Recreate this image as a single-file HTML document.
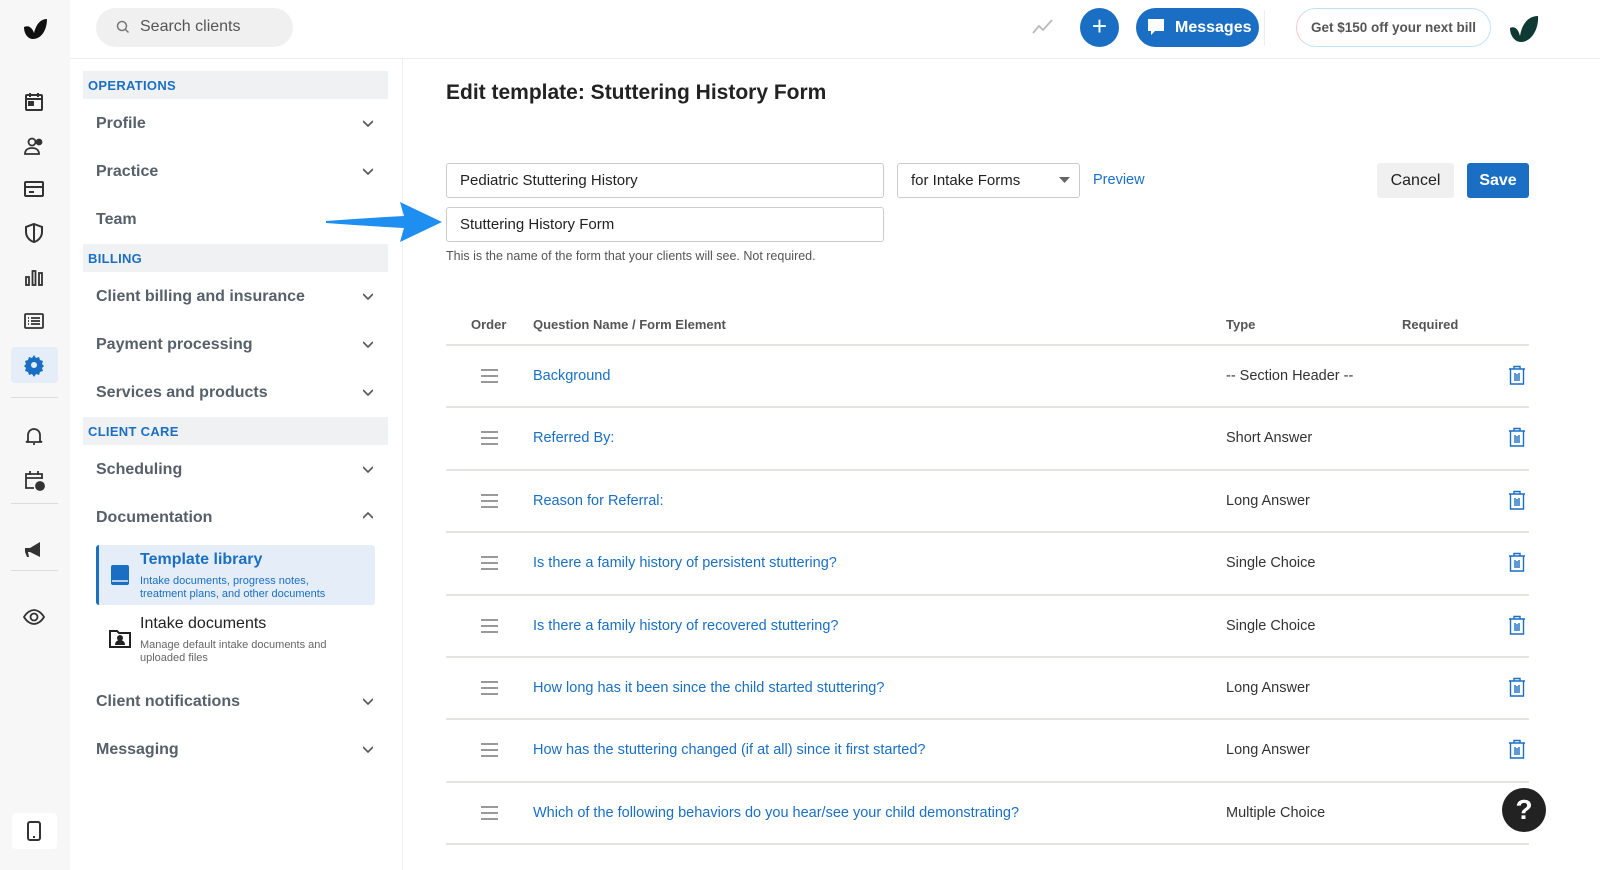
<!DOCTYPE html>
<html><head><style>
*{box-sizing:border-box;margin:0;padding:0}
body{width:1600px;height:870px;overflow:hidden;font-family:"Liberation Sans",Arial,sans-serif;background:#fff;position:relative;color:#222}
.rail{position:absolute;left:0;top:0;width:70px;height:870px;background:#f7f7f7}
.ri{position:absolute;left:22px;width:24px;height:24px}
.sep{position:absolute;left:11px;width:47px;height:1px;background:#ddd}
.top{position:absolute;left:70px;top:0;right:0;height:59px;border-bottom:1px solid #ececec}
.side{position:absolute;left:70px;top:59px;width:333px;height:811px;border-right:1px solid #eee}
.sh{position:absolute;left:13px;width:305px;height:28px;background:#f0f1f2;color:#1a6fc4;font-weight:bold;font-size:13px;padding:7px 5px;letter-spacing:.3px}
.si{position:absolute;left:26px;font-size:16px;color:#56606a;font-weight:bold}
.chev{position:absolute;left:293px;width:10px;height:10px}
.main{position:absolute;left:446px}
.in{position:absolute;border:1px solid #ccc;border-radius:3px;font-size:15px;padding:0 13px;line-height:33px;height:35px;color:#222}
.row{position:absolute;left:446px;width:1083px;height:63px;border-top:2px solid #e6e4df}
.row .q{position:absolute;left:87px;top:22px;color:#1a6fc4;font-size:14.5px}
.row .t{position:absolute;left:780px;top:22px;font-size:14.5px;color:#333}
.row .h{position:absolute;left:35px;top:23px;width:17px}
.row .h i{display:block;height:2px;background:#999;margin-bottom:4px}
.row svg{position:absolute;left:1062px;top:19px}
</style></head><body>
<div class="rail">
<svg style="position:absolute;left:22px;top:17px" width="26" height="24" viewBox="0 0 26 24"><path d="M2 10 C6 8 10 10 12 16 C14 8 18 2 25 2 C25 12 20 22 11 22 C6 22 2 17 2 10Z" fill="#111"/></svg>
<svg class="ri" style="top:90px" viewBox="0 0 24 24" fill="none" stroke="#333" stroke-width="2"><rect x="4" y="5" width="16" height="15" rx="1"/><path d="M4 9h16M8 3v4M16 3v4"/><rect x="7" y="12" width="4" height="3" fill="#333"/></svg>
<svg class="ri" style="top:134px" viewBox="0 0 24 24" fill="none" stroke="#333" stroke-width="1.8"><circle cx="10" cy="8" r="3.5"/><path d="M3 20c0-4 3-6 7-6s7 2 7 6z"/><circle cx="17" cy="8" r="2.5" fill="#333"/></svg>
<svg class="ri" style="top:177px" viewBox="0 0 24 24" fill="none" stroke="#333" stroke-width="2"><rect x="3" y="5" width="18" height="14" rx="1"/><path d="M3 10h18M7 15h5"/></svg>
<svg class="ri" style="top:221px" viewBox="0 0 24 24" fill="none" stroke="#333" stroke-width="2"><path d="M12 3l8 3v5c0 5-4 9-8 10-4-1-8-5-8-10V6z M12 3v18"/></svg>
<svg class="ri" style="top:265px" viewBox="0 0 24 24" fill="none" stroke="#333" stroke-width="1.8"><rect x="4" y="12" width="3" height="8"/><rect x="10.5" y="6" width="3" height="14"/><rect x="17" y="8" width="3" height="12"/></svg>
<svg class="ri" style="top:309px" viewBox="0 0 24 24" fill="none" stroke="#333" stroke-width="1.8"><rect x="3" y="5" width="18" height="14" rx="1"/><path d="M6 9h1M9 9h9M6 12h1M9 12h9M6 15h1M9 15h9"/></svg>
<div style="position:absolute;left:11px;top:347px;width:47px;height:36px;background:#e5eef8;border-radius:4px"></div>
<svg class="ri" style="top:353px" viewBox="0 0 24 24"><path d="M12 2l2 3 3-1 1 3 3 1-1 3 2 2-2 2 1 3-3 1-1 3-3-1-2 3-2-3-3 1-1-3-3-1 1-3-2-2 2-2-1-3 3-1 1-3 3 1z" fill="#1a6fc4"/><circle cx="12" cy="12" r="3" fill="#e5eef8"/></svg>
<div class="sep" style="top:397px"></div>
<svg class="ri" style="top:424px" viewBox="0 0 24 24" fill="none" stroke="#333" stroke-width="1.8"><path d="M6 17V11a6 6 0 0112 0v6l2 1H4z M11 20h2"/></svg>
<svg class="ri" style="top:468px" viewBox="0 0 24 24" fill="none" stroke="#333" stroke-width="1.8"><path d="M20 11V6H4v14h8M4 10h16M8 3v4M16 3v4"/><circle cx="18" cy="18" r="4" fill="#333"/></svg>
<div class="sep" style="top:503px"></div>
<svg class="ri" style="top:538px" viewBox="0 0 24 24"><path d="M3 10h5l10-6v15L8 14H6l1 5H5l-2-5z" fill="#333"/></svg>
<div class="sep" style="top:570px"></div>
<svg class="ri" style="top:605px" viewBox="0 0 24 24" fill="none" stroke="#333" stroke-width="1.8"><path d="M2 12c3-5 7-7 10-7s7 2 10 7c-3 5-7 7-10 7s-7-2-10-7z"/><circle cx="12" cy="12" r="3.5"/></svg>
<div style="position:absolute;left:12px;top:813px;width:45px;height:36px;background:#fff;border-radius:4px"></div>
<svg class="ri" style="top:819px" viewBox="0 0 24 24" fill="none" stroke="#333" stroke-width="2"><rect x="6" y="3" width="12" height="18" rx="2"/><path d="M11 18h2"/></svg>
</div>
<div class="top">
<div style="position:absolute;left:26px;top:8px;width:197px;height:39px;border-radius:20px;background:#f0f0f0;font-size:16px;color:#555;padding:10px 0 0 44px">Search clients</div>
<svg style="position:absolute;left:46px;top:20px" width="14" height="14" viewBox="0 0 14 14" fill="none" stroke="#777" stroke-width="1.5"><circle cx="6" cy="6" r="4.5"/><path d="M9.5 9.5l3 3"/></svg>
<svg style="position:absolute;left:962px;top:18px" width="22" height="18" viewBox="0 0 22 18" fill="none" stroke="#bbb" stroke-width="1.8"><path d="M1 15l6-7 4 4 9-10"/></svg>
<div style="position:absolute;left:1010px;top:8px;width:39px;height:39px;border-radius:50%;background:#1a6fc4;color:#fff;font-size:26px;text-align:center;line-height:37px">+</div>
<div style="position:absolute;left:1066px;top:8px;width:123px;height:39px;border-radius:20px;background:#1a6fc4;color:#fff;font-size:16px;font-weight:bold;padding:11px 0 0 39px">Messages</div>
<svg style="position:absolute;left:1076px;top:17px" width="20" height="20" viewBox="0 0 20 20"><path d="M2 2h16v12H9l-4 4v-4H2z" fill="#fff"/></svg>
<div style="position:absolute;left:1194px;top:10px;width:1px;height:36px;background:#eee"></div>
<div style="position:absolute;left:1226px;top:8px;width:195px;height:39px;border-radius:20px;border:1px solid #bfe3f2;border-left-color:#f5c8cc;font-size:13.5px;font-weight:bold;color:#555;padding:11px 0 0 14px">Get $150 off your next bill</div>
<svg style="position:absolute;left:1438px;top:12px" width="32" height="32" viewBox="0 0 32 32"><path d="M2 16 C6 14 10 16 12 24 C14 12 20 4 30 4 C31 16 24 30 13 30 C7 30 2 24 2 16Z" fill="#0f3a33"/></svg>
</div>
<div class="side">
<div class="sh" style="top:12px">OPERATIONS</div>
<div class="si" style="top:56px">Profile</div>
<div class="si" style="top:104px">Practice</div>
<div class="si" style="top:152px">Team</div>
<div class="sh" style="top:185px">BILLING</div>
<div class="si" style="top:229px">Client billing and insurance</div>
<div class="si" style="top:277px">Payment processing</div>
<div class="si" style="top:325px">Services and products</div>
<div class="sh" style="top:358px">CLIENT CARE</div>
<div class="si" style="top:402px">Scheduling</div>
<div class="si" style="top:450px">Documentation</div>
<div style="position:absolute;left:26px;top:486px;width:279px;height:60px;background:#e5eef8;border-left:3px solid #1a6fc4;border-radius:3px"></div>
<svg style="position:absolute;left:40px;top:505px" width="20" height="22" viewBox="0 0 20 22"><rect x="1" y="1" width="18" height="20" rx="2" fill="#1a6fc4"/><path d="M2 17h16" stroke="#e5eef8" stroke-width="1.5"/></svg>
<div style="position:absolute;left:70px;top:492px;font-size:16px;color:#1a6fc4;font-weight:bold">Template library</div>
<div style="position:absolute;left:70px;top:516px;font-size:11px;color:#1a6fc4;line-height:13px">Intake documents, progress notes,<br>treatment plans, and other documents</div>
<svg style="position:absolute;left:39px;top:569px" width="22" height="20" viewBox="0 0 22 20" fill="none" stroke="#222" stroke-width="2"><path d="M1 3h7l2 2h11v14H1z"/><circle cx="11" cy="10" r="2" fill="#222"/><path d="M7 17c0-3 2-4 4-4s4 1 4 4" fill="#222"/></svg>
<div style="position:absolute;left:70px;top:556px;font-size:16px;color:#222">Intake documents</div>
<div style="position:absolute;left:70px;top:580px;font-size:11px;color:#666;line-height:13px">Manage default intake documents and<br>uploaded files</div>
<div class="si" style="top:634px">Client notifications</div>
<div class="si" style="top:682px">Messaging</div>
<svg class="chev" style="top:60px" viewBox="0 0 10 10"><path d="M0 2l5 5 5-5" stroke="#555" stroke-width="1.6" fill="none"/></svg>
<svg class="chev" style="top:108px" viewBox="0 0 10 10"><path d="M0 2l5 5 5-5" stroke="#555" stroke-width="1.6" fill="none"/></svg>
<svg class="chev" style="top:233px" viewBox="0 0 10 10"><path d="M0 2l5 5 5-5" stroke="#555" stroke-width="1.6" fill="none"/></svg>
<svg class="chev" style="top:281px" viewBox="0 0 10 10"><path d="M0 2l5 5 5-5" stroke="#555" stroke-width="1.6" fill="none"/></svg>
<svg class="chev" style="top:329px" viewBox="0 0 10 10"><path d="M0 2l5 5 5-5" stroke="#555" stroke-width="1.6" fill="none"/></svg>
<svg class="chev" style="top:406px" viewBox="0 0 10 10"><path d="M0 2l5 5 5-5" stroke="#555" stroke-width="1.6" fill="none"/></svg>
<svg class="chev" style="top:452px" viewBox="0 0 10 10"><path d="M0 7l5-5 5 5" stroke="#555" stroke-width="1.6" fill="none"/></svg>
<svg class="chev" style="top:638px" viewBox="0 0 10 10"><path d="M0 2l5 5 5-5" stroke="#555" stroke-width="1.6" fill="none"/></svg>
<svg class="chev" style="top:686px" viewBox="0 0 10 10"><path d="M0 2l5 5 5-5" stroke="#555" stroke-width="1.6" fill="none"/></svg>
</div>
<svg style="position:absolute;left:326px;top:200px" width="118" height="44" viewBox="0 0 118 44"><path d="M0 21 Q40 18 78 16 L74 2 L116 22 L74 42 L78 28 Q40 26 0 23Z" fill="#1f8ef1"/></svg>
<div class="main" style="top:81px;font-size:21px;font-weight:bold;color:#222">Edit template: Stuttering History Form</div>
<div class="in" style="left:446px;top:163px;width:438px">Pediatric Stuttering History</div>
<div class="in" style="left:897px;top:163px;width:183px">for Intake Forms</div>
<svg style="position:absolute;left:1059px;top:177px" width="11" height="6"><path d="M0 0h11L5.5 6z" fill="#666"/></svg>
<div style="position:absolute;left:1093px;top:172px;font-size:14.5px;color:#1a6fc4">Preview</div>
<div style="position:absolute;left:1377px;top:163px;width:77px;height:35px;background:#f0f0f0;border-radius:3px;font-size:16px;text-align:center;line-height:35px;color:#222">Cancel</div>
<div style="position:absolute;left:1467px;top:163px;width:62px;height:35px;background:#1a6fc4;border-radius:3px;font-size:16px;font-weight:bold;text-align:center;line-height:35px;color:#fff">Save</div>
<div class="in" style="left:446px;top:207px;width:438px">Stuttering History Form</div>
<div style="position:absolute;left:446px;top:249px;font-size:12.5px;color:#555">This is the name of the form that your clients will see. Not required.</div>
<div style="position:absolute;top:317px;left:471px;font-size:13px;font-weight:bold;color:#555">Order</div>
<div style="position:absolute;top:317px;left:533px;font-size:13px;font-weight:bold;color:#555">Question Name / Form Element</div>
<div style="position:absolute;top:317px;left:1226px;font-size:13px;font-weight:bold;color:#555">Type</div>
<div style="position:absolute;top:317px;left:1402px;font-size:13px;font-weight:bold;color:#555">Required</div>
<div class="row" style="top:344px"><div class="h"><i></i><i></i><i></i></div><div class="q">Background</div><div class="t">-- Section Header --</div><svg width="18" height="20" viewBox="0 0 18 20" fill="none" stroke="#1a6fc4" stroke-width="1.4"><path d="M1 4h16M6 4V1.5h6V4M2.5 4v15h13V4M7 8v8M9 9v7M11 8v8"/></svg></div>
<div class="row" style="top:406px"><div class="h"><i></i><i></i><i></i></div><div class="q">Referred By:</div><div class="t">Short Answer</div><svg width="18" height="20" viewBox="0 0 18 20" fill="none" stroke="#1a6fc4" stroke-width="1.4"><path d="M1 4h16M6 4V1.5h6V4M2.5 4v15h13V4M7 8v8M9 9v7M11 8v8"/></svg></div>
<div class="row" style="top:469px"><div class="h"><i></i><i></i><i></i></div><div class="q">Reason for Referral:</div><div class="t">Long Answer</div><svg width="18" height="20" viewBox="0 0 18 20" fill="none" stroke="#1a6fc4" stroke-width="1.4"><path d="M1 4h16M6 4V1.5h6V4M2.5 4v15h13V4M7 8v8M9 9v7M11 8v8"/></svg></div>
<div class="row" style="top:531px"><div class="h"><i></i><i></i><i></i></div><div class="q">Is there a family history of persistent stuttering?</div><div class="t">Single Choice</div><svg width="18" height="20" viewBox="0 0 18 20" fill="none" stroke="#1a6fc4" stroke-width="1.4"><path d="M1 4h16M6 4V1.5h6V4M2.5 4v15h13V4M7 8v8M9 9v7M11 8v8"/></svg></div>
<div class="row" style="top:594px"><div class="h"><i></i><i></i><i></i></div><div class="q">Is there a family history of recovered stuttering?</div><div class="t">Single Choice</div><svg width="18" height="20" viewBox="0 0 18 20" fill="none" stroke="#1a6fc4" stroke-width="1.4"><path d="M1 4h16M6 4V1.5h6V4M2.5 4v15h13V4M7 8v8M9 9v7M11 8v8"/></svg></div>
<div class="row" style="top:656px"><div class="h"><i></i><i></i><i></i></div><div class="q">How long has it been since the child started stuttering?</div><div class="t">Long Answer</div><svg width="18" height="20" viewBox="0 0 18 20" fill="none" stroke="#1a6fc4" stroke-width="1.4"><path d="M1 4h16M6 4V1.5h6V4M2.5 4v15h13V4M7 8v8M9 9v7M11 8v8"/></svg></div>
<div class="row" style="top:718px"><div class="h"><i></i><i></i><i></i></div><div class="q">How has the stuttering changed (if at all) since it first started?</div><div class="t">Long Answer</div><svg width="18" height="20" viewBox="0 0 18 20" fill="none" stroke="#1a6fc4" stroke-width="1.4"><path d="M1 4h16M6 4V1.5h6V4M2.5 4v15h13V4M7 8v8M9 9v7M11 8v8"/></svg></div>
<div class="row" style="top:781px"><div class="h"><i></i><i></i><i></i></div><div class="q">Which of the following behaviors do you hear/see your child demonstrating?</div><div class="t">Multiple Choice</div></div>
<div style="position:absolute;left:446px;top:843px;width:1083px;height:2px;background:#e6e4df"></div>
<div style="position:absolute;left:1502px;top:788px;width:44px;height:44px;border-radius:50%;background:#222;color:#fff;font-size:28px;font-weight:bold;text-align:center;line-height:44px">?</div>
</body></html>
